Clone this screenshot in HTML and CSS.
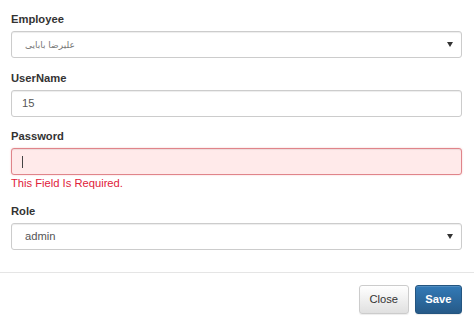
FILE: index.html
```html
<!DOCTYPE html>
<html>
<head>
<meta charset="utf-8">
<link rel="stylesheet" href="styles.css">
</head>
<body>
<div class="modal">
  <div class="modal-body">
    <div class="group">
      <label class="label">Employee</label>
      <div class="select"><span class="fa">علیرضا بابایی</span><span class="arrow"></span></div>
    </div>
    <div class="group">
      <label class="label">UserName</label>
      <div class="input">15</div>
    </div>
    <div class="group">
      <label class="label">Password</label>
      <div class="input error"><span class="caret"></span></div>
      <div class="help">This Field Is Required.</div>
    </div>
    <div class="group">
      <label class="label">Role</label>
      <div class="select"><span class="val">admin</span><span class="arrow"></span></div>
    </div>
  </div>
  <div class="modal-footer">
    <button class="btn btn-default">Close</button>
    <button class="btn btn-primary">Save</button>
  </div>
</div>
</body>
</html>
```
FILE: styles.css
```css
html, body {
  margin: 0;
  padding: 0;
  background: #fff;
}
body {
  font-family: "Liberation Sans", Arial, sans-serif;
  font-size: 11.2px;
  line-height: 16px;
  color: #333;
}
.modal {
  width: 474px;
}
.modal-body {
  padding: 11px 12px 10px 11px;
}
.group {
  margin-bottom: 11.5px;
}
.group:last-child {
  margin-bottom: 12px;
}
.label {
  display: block;
  font-weight: bold;
  margin-bottom: 4px;
  color: #333;
}
.input, .select {
  box-sizing: border-box;
  height: 27px;
  border: 1px solid #ccc;
  border-radius: 3px;
  box-shadow: inset 0 1px 1px rgba(0,0,0,0.075);
  display: flex;
  align-items: center;
  padding: 0 10px;
  color: #555;
  background: #fff;
}
.select {
  padding: 0 8px 0 13px;
  justify-content: space-between;
}
.fa {
  font-family: "DejaVu Sans", sans-serif;
  font-size: 9px;
  color: #777;
}
.val {
  color: #555;
}
.arrow {
  width: 0;
  height: 0;
  border-left: 3px solid transparent;
  border-right: 3px solid transparent;
  border-top: 5px solid #333;
}
.input.error {
  border-color: #e0848a;
  background: #ffeaea;
  box-shadow: inset 0 1px 1px rgba(0,0,0,0.075), 0 0 2px rgba(230,120,120,0.4);
}
.caret {
  display: block;
  width: 1px;
  height: 12px;
  background: #444;
}
.help {
  color: #e0213a;
  margin-top: 0;
}
.modal-footer {
  border-top: 1px solid #e5e5e5;
  padding: 12px 12px 12px 12px;
  display: flex;
  justify-content: flex-end;
  gap: 6px;
}
.btn {
  font-family: "Liberation Sans", Arial, sans-serif;
  font-size: 11.2px;
  line-height: 16px;
  padding: 5px 9.6px 6px;
  border-radius: 3px;
  border: 1px solid #ccc;
  margin: 0;
}
.btn-default {
  color: #333;
  background: linear-gradient(to bottom, #fff 0%, #e0e0e0 100%);
  border-color: #ccc;
  box-shadow: inset 0 1px 0 rgba(255,255,255,0.15), 0 1px 1px rgba(0,0,0,0.075);
}
.btn-primary {
  color: #fff;
  font-weight: bold;
  background: linear-gradient(to bottom, #337ab7 0%, #265a88 100%);
  border-color: #245580;
  box-shadow: inset 0 1px 0 rgba(255,255,255,0.15), 0 1px 1px rgba(0,0,0,0.075);
}
```
